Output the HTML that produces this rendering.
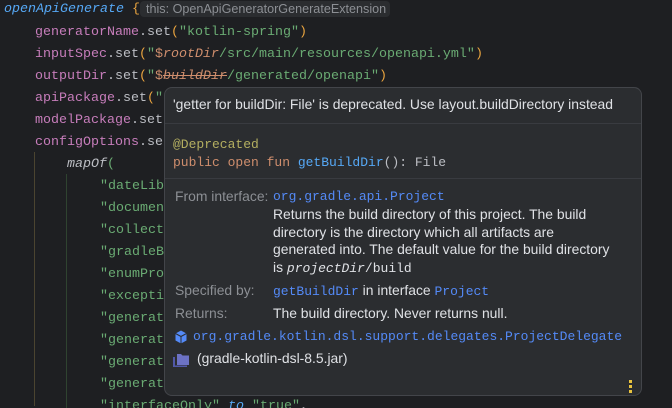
<!DOCTYPE html>
<html><head><meta charset="utf-8"><style>
*{margin:0;padding:0;box-sizing:border-box}
html{width:672px;height:408px;overflow:hidden}
body{width:672px;height:408px;background:#1e1f22;overflow:hidden;position:relative;font-family:"Liberation Mono",monospace;}
.ln{position:absolute;left:0;height:22px;line-height:22px;font-size:13.33px;white-space:pre;color:#bcbec4}
.p{color:#c77dbb}.s{color:#6aab73}.o{color:#e8a33f}.i{font-style:italic}.b{color:#56a8f5}.r{color:#cf8e6d}
.g{position:absolute;top:152px;height:256px;width:1px}
#hint{position:absolute;left:140px;top:1px;width:250px;height:16px;background:#2b2d30;border-radius:4px;color:#8c8f94;font:12.6px "Liberation Sans",sans-serif;line-height:16px;padding-left:6px;white-space:nowrap;overflow:hidden}
#pop{position:absolute;left:164px;top:87px;width:478px;height:309px;background:#2b2d30;border:1px solid #43454a;border-radius:8px;font-family:"Liberation Sans",sans-serif;font-size:13.9px;color:#dfe1e5}
#pop div{position:absolute;white-space:pre}
.sep{height:1px;background:#393b40;left:0;right:0}
.m{font-family:"Liberation Mono",monospace;font-size:13px}
.lk{color:#548af7}.lbl{color:#8c8f94}
</style></head><body>
<div class="g" style="left:34px;height:254px;background:#4b4430"></div>
<div class="g" style="left:66px;top:174px;height:234px;background:#2f4330"></div>
<div class="ln" style="top:-1px;left:4px"><span class="b i">openApiGenerate</span> <span class="o">{</span></div>
<div id="hint">this: OpenApiGeneratorGenerateExtension</div>
<div class="ln" style="top:22px;left:35px"><span class="p">generatorName</span>.set<span class="o">(</span><span class="s">"kotlin-spring"</span><span class="o">)</span></div>
<div class="ln" style="top:44px;left:35px"><span class="p">inputSpec</span>.set<span class="o">(</span><span class="s">"</span><span class="r">$</span><span class="r i">rootDir</span><span class="s">/src/main/resources/openapi.yml"</span><span class="o">)</span></div>
<div class="ln" style="top:66px;left:35px"><span class="p">outputDir</span>.set<span class="o">(</span><span class="s">"</span><span class="r">$</span><span class="r i" style="text-decoration:line-through">buildDir</span><span class="s">/generated/openapi"</span><span class="o">)</span></div>
<div class="ln" style="top:88px;left:35px"><span class="p">apiPackage</span>.set<span class="o">(</span><span class="s">"</span></div>
<div class="ln" style="top:110px;left:35px"><span class="p">modelPackage</span>.set</div>
<div class="ln" style="top:132px;left:35px"><span class="p">configOptions</span>.se</div>
<div class="ln" style="top:154px;left:67px"><span class="i">mapOf</span><span class="s">(</span></div>
<div class="ln s" style="top:176px;left:100px">"dateLib</div>
<div class="ln s" style="top:198px;left:100px">"documen</div>
<div class="ln s" style="top:220px;left:100px">"collect</div>
<div class="ln s" style="top:242px;left:100px">"gradleB</div>
<div class="ln s" style="top:264px;left:100px">"enumPro</div>
<div class="ln s" style="top:286px;left:100px">"excepti</div>
<div class="ln s" style="top:308px;left:100px">"generat</div>
<div class="ln s" style="top:330px;left:100px">"generat</div>
<div class="ln s" style="top:352px;left:100px">"generat</div>
<div class="ln s" style="top:374px;left:100px">"generat</div>
<div class="ln" style="top:396px;left:100px;height:12px;overflow:hidden;line-height:22px"><span class="s">"interfaceOnly"</span> <span class="b i">to</span> <span class="s">"true"</span>,</div>
<div id="pop">
<div style="left:8px;top:8px">'getter for buildDir: File' is deprecated. Use layout.buildDirectory instead</div>
<div class="sep" style="top:35px"></div>
<div class="m" style="left:8px;top:49px;color:#b3ae60">@Deprecated</div>
<div class="m" style="left:8px;top:67px"><span style="color:#cf8e6d">public open fun </span><span style="color:#56a8f5">getBuildDir</span><span style="color:#bcbec4">(): File</span></div>
<div class="sep" style="top:90px"></div>
<div class="lbl" style="left:10px;top:100px">From interface:</div>
<div class="m lk" style="left:108px;top:101px">org.gradle.api.Project</div>
<div style="left:108px;top:118px;line-height:17.5px">Returns the build directory of this project. The build
directory is the directory which all artifacts are
generated into. The default value for the build directory
is <span class="m i">projectDir</span><span class="m">/build</span></div>
<div class="lbl" style="left:10px;top:194px">Specified by:</div>
<div style="left:108px;top:194px"><span class="m lk">getBuildDir</span> in interface <span class="m lk">Project</span></div>
<div class="lbl" style="left:10px;top:217px">Returns:</div>
<div style="left:108px;top:217px">The build directory. Never returns null.</div>
<div style="left:10px;top:242px"><svg width="12" height="14" viewBox="0 0 12 14"><path d="M6 0.5L11.5 3.5V10.5L6 13.5L0.5 10.5V3.5Z" fill="#548af7"/><path d="M0.5 3.5L6 6.5L11.5 3.5M6 6.5V13.5" stroke="#2b2d30" stroke-width="1" fill="none"/></svg></div>
<div class="m lk" style="left:28px;top:241px">org.gradle.kotlin.dsl.support.delegates.ProjectDelegate</div>
<div style="left:8px;top:265px"><svg width="17" height="14" viewBox="0 0 17 14"><path d="M4 1h4l1.5 1.5H16V12H4Z" fill="#6c72c4"/><path d="M1 4v9.5h13" stroke="#5158a8" stroke-width="2" fill="none"/></svg></div>
<div style="left:32px;top:262px">(gradle-kotlin-dsl-8.5.jar)</div>
<div style="left:464px;top:292px;width:3px;height:3px;background:#e8c33f"></div>
<div style="left:464px;top:297px;width:3px;height:3px;background:#e8c33f"></div>
<div style="left:464px;top:302px;width:3px;height:3px;background:#e8c33f"></div>
</div>
</body></html>
